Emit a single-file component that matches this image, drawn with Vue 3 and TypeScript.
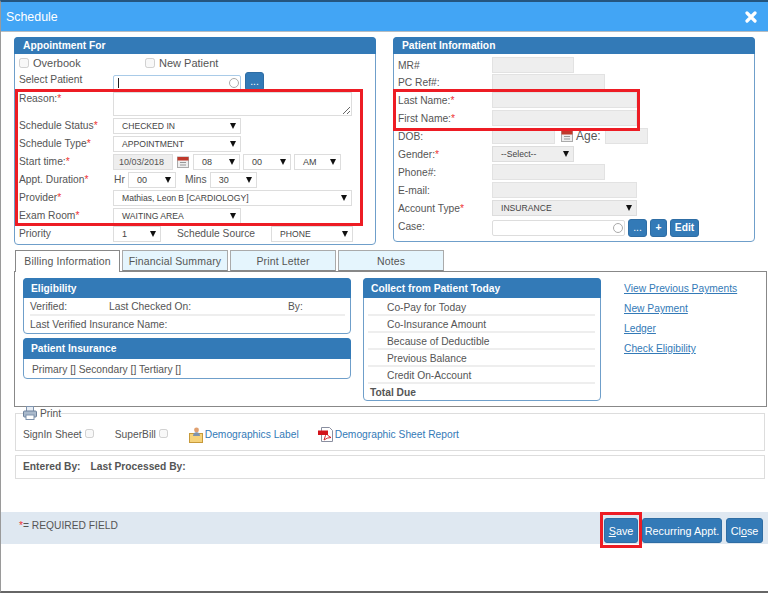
<template>
  <div class="modal">
    <div class="title-bar">
      <span class="title">Schedule</span>
      <svg class="close-x" width="12" height="12" viewBox="0 0 12 12"><path d="M2 2 L10 10 M10 2 L2 10" stroke="#fff" stroke-width="3.2" stroke-linecap="round" /></svg>
    </div>

    <div class="top-panels">
      <section class="panel appt">
        <h3 class="panel-head">Appointment For</h3>
        <div class="panel-body">
          <div class="check-row">
            <label class="check first"><input type="checkbox" disabled />Overbook</label>
            <label class="check"><input type="checkbox" disabled />New Patient</label>
          </div>
          <div class="row patient-row">
            <span class="lbl">Select Patient</span>
            <div class="lookup focus w128"><i class="caret"></i><b class="ring"></b></div>
            <button class="btn dots">...</button>
          </div>
          <div class="row reason-row">
            <span class="lbl">Reason:<em>*</em></span>
            <textarea class="reason"></textarea>
          </div>
          <div class="row">
            <span class="lbl">Schedule Status<em>*</em></span>
            <div class="sel w128"><span>CHECKED IN</span></div>
          </div>
          <div class="row">
            <span class="lbl">Schedule Type<em>*</em></span>
            <div class="sel w128"><span>APPOINTMENT</span></div>
          </div>
          <div class="row">
            <span class="lbl">Start time:<em>*</em></span>
            <div class="date">10/03/2018</div>
            <svg class="cal" width="12" height="12" viewBox="0 0 12 12"><rect x="0.5" y="1" width="11" height="10.5" fill="#eee" stroke="#aaa" /><rect x="0.5" y="1" width="11" height="3.5" fill="#c0392b" /><path d="M3 6.5h6M3 9h6" stroke="#999" /></svg>
            <div class="sel time w47"><span>08</span></div>
            <div class="sel time w48"><span>00</span></div>
            <div class="sel time w47"><span>AM</span></div>
          </div>
          <div class="row">
            <span class="lbl">Appt. Duration<em>*</em></span>
            <span class="inline-lbl hr">Hr</span>
            <div class="sel time w48"><span>00</span></div>
            <span class="inline-lbl mins">Mins</span>
            <div class="sel time w47"><span>30</span></div>
          </div>
          <div class="row">
            <span class="lbl">Provider<em>*</em></span>
            <div class="sel w239"><span>Mathias, Leon B [CARDIOLOGY]</span></div>
          </div>
          <div class="row">
            <span class="lbl">Exam Room<em>*</em></span>
            <div class="sel w128"><span>WAITING AREA</span></div>
          </div>
          <div class="row">
            <span class="lbl">Priority</span>
            <div class="sel time w48"><span>1</span></div>
            <span class="inline-lbl source">Schedule Source</span>
            <div class="sel w82"><span>PHONE</span></div>
          </div>
        </div>
        <div class="mark mark-appt"></div>
      </section>

      <section class="panel info">
        <h3 class="panel-head">Patient Information</h3>
        <div class="panel-body">
          <div class="row mr-row"><span class="lbl">MR#</span><div class="ro w82"></div></div>
          <div class="row"><span class="lbl">PC Ref#:</span><div class="ro w113"></div></div>
          <div class="row"><span class="lbl">Last Name:<em>*</em></span><div class="ro w145"></div></div>
          <div class="row"><span class="lbl">First Name:<em>*</em></span><div class="ro w145"></div></div>
          <div class="row">
            <span class="lbl">DOB:</span>
            <div class="ro w63"></div>
            <svg class="cal dob" width="12" height="12" viewBox="0 0 12 12"><rect x="0.5" y="1" width="11" height="10.5" fill="#eee" stroke="#aaa" /><rect x="0.5" y="1" width="11" height="3.5" fill="#c0392b" /><path d="M3 6.5h6M3 9h6" stroke="#999" /></svg>
            <span class="age">Age:</span>
            <div class="ro w43"></div>
          </div>
          <div class="row"><span class="lbl">Gender:<em>*</em></span><div class="sel ro-sel w82"><span>--Select--</span></div></div>
          <div class="row"><span class="lbl">Phone#:</span><div class="ro w113"></div></div>
          <div class="row"><span class="lbl">E-mail:</span><div class="ro w145"></div></div>
          <div class="row"><span class="lbl">Account Type<em>*</em></span><div class="sel ro-sel w145"><span>INSURANCE</span></div></div>
          <div class="row case-row">
            <span class="lbl">Case:</span>
            <div class="lookup w133"><b class="ring"></b></div>
            <button class="btn dots">...</button>
            <button class="btn plus">+</button>
            <button class="btn edit">Edit</button>
          </div>
        </div>
        <div class="mark mark-info"></div>
      </section>
    </div>

    <div class="tabs">
      <div v-for="(tab, i) in tabs" :key="tab" class="tab" :class="{ active: i === 0 }">{{ tab }}</div>
    </div>
    <div class="tab-body">
      <div class="billing-left">
        <section class="panel sub">
          <h4 class="sub-head">Eligibility</h4>
          <div class="sub-line elig">
            <span class="v">Verified:</span><span class="c">Last Checked On:</span><span>By:</span>
          </div>
          <div class="sub-line plain">Last Verified Insurance Name:</div>
        </section>
        <section class="panel sub ins">
          <h4 class="sub-head tall">Patient Insurance</h4>
          <div class="sub-line plain prim">Primary [] Secondary [] Tertiary []</div>
        </section>
      </div>
      <section class="panel sub collect">
        <h4 class="sub-head">Collect from Patient Today</h4>
        <div v-for="item in dues" :key="item" class="due">{{ item }}</div>
        <div class="due total">Total Due</div>
      </section>
      <div class="links">
        <a v-for="link in links" :key="link" href="#">{{ link }}</a>
      </div>
    </div>

    <fieldset class="print-box">
      <legend>
        <svg width="14" height="14" viewBox="0 0 14 14"><rect x="3.5" y="0.5" width="7" height="5" fill="#e8eef5" stroke="#7f93ad" /><rect x="0.5" y="5" width="13" height="6" rx="1" fill="#a9b9cc" stroke="#6d819c" /><rect x="3" y="9" width="8" height="4.5" fill="#fff" stroke="#7f93ad" /></svg>
        Print
      </legend>
      <span class="opt">SignIn Sheet</span><input class="opt-check" type="checkbox" disabled />
      <span class="opt super">SuperBill</span><input class="opt-check" type="checkbox" disabled />
      <svg class="doc-ico label-ico" width="14" height="16" viewBox="0 0 14 16"><rect x="0.5" y="6.5" width="13" height="9" fill="#f5d27a" stroke="#c79a3a" /><circle cx="7.5" cy="3" r="2.4" fill="#e0a070" /><path d="M4 9 Q4 5.2 7.5 5.2 Q11 5.2 11 9Z" fill="#7f93ad" /></svg>
      <a class="rep" href="#">Demographics Label</a>
      <svg class="doc-ico pdf-ico" width="15" height="15" viewBox="0 0 15 15"><path d="M3.5 0.5h8l3 3v11h-11z" fill="#fff" stroke="#8a8fa0" /><rect x="0" y="3.5" width="10" height="4.5" fill="#d3121a" /><path d="M6 13 Q8 8 8 5 Q10 10 13 10.5 Q9 10.5 6 13Z" fill="none" stroke="#d3121a" stroke-width="0.9" /></svg>
      <a class="rep" href="#">Demographic Sheet Report</a>
    </fieldset>

    <div class="entered">
      <strong>Entered By:</strong><strong>Last Processed By:</strong>
    </div>

    <footer class="foot">
      <span class="req"><em>*</em>= REQUIRED FIELD</span>
      <div class="foot-btns">
        <button class="btn big save"><u>S</u>ave<i class="mark mark-save"></i></button>
        <button class="btn big recur">Recurring Appt.</button>
        <button class="btn big close">Cl<u>o</u>se</button>
      </div>
    </footer>
  </div>
</template>

<script setup lang="ts">
const tabs: string[] = ['Billing Information', 'Financial Summary', 'Print Letter', 'Notes']
const dues: string[] = ['Co-Pay for Today', 'Co-Insurance Amount', 'Because of Deductible', 'Previous Balance', 'Credit On-Account']
const links: string[] = ['View Previous Payments', 'New Payment', 'Ledger', 'Check Eligibility']
</script>

<style>
html,
body {
  margin: 0;
  background: #fff;
}
</style>

<style scoped>
* {
  box-sizing: border-box;
}

.modal {
  position: relative;
  width: 768px;
  height: 593px;
  overflow: hidden;
  background: #fff;
  border-top: 2px solid #24557f;
  border-left: 1px solid #9a9a9a;
  border-bottom: 2px solid #666;
  font-family: 'Liberation Sans', Arial, sans-serif;
  font-size: 10.25px;
  color: #555;
}

.title-bar {
  display: flex;
  align-items: center;
  justify-content: space-between;
  height: 30px;
  padding: 1px 11px 0 5px;
  background: #42a5f5;
  border-bottom: 1px solid #b5bcc2;
}

.title {
  font-size: 12.4px;
  color: #fff;
}

.top-panels {
  display: flex;
  align-items: flex-start;
  gap: 17px;
  padding: 5px 0 0 13px;
}

.panel {
  position: relative;
  border: 1px solid #6f9fca;
  border-radius: 4px;
  background: #fff;
}

.appt,
.info {
  width: 362px;
}

.appt {
  height: 208px;
}

.info {
  height: 205px;
}

.panel-head {
  margin: -1px -1px 0;
  height: 17px;
  padding: 0 9px;
  background: #337ab7;
  border-radius: 4px 4px 0 0;
  color: #fff;
  font-size: 10.25px;
  font-weight: bold;
  line-height: 17px;
}

.panel-body {
  display: flex;
  flex-direction: column;
  gap: 2px;
  padding: 1px 0 0 4px;
}

.row {
  display: flex;
  align-items: center;
  height: 16px;
}

.lbl {
  flex: none;
  width: 94px;
  white-space: nowrap;
}

.appt .lbl {
  margin-top: -2px;
}

em {
  color: #e33;
  font-style: normal;
}

.check-row {
  display: flex;
  height: 15px;
  align-items: center;
  font-size: 11px;
}

.check {
  display: flex;
  align-items: center;
  gap: 4px;
}

.check.first {
  width: 126px;
}

.check input,
.opt-check {
  width: 10px;
  height: 10px;
  margin: 0;
}

.patient-row {
  height: 19px;
  margin-bottom: -1px;
}

.appt .patient-row .lbl {
  margin-top: -5px;
}

.patient-row .lookup {
  margin-top: 3px;
}

.patient-row .btn {
  height: 19px;
  margin-left: 4px;
}

.lookup {
  position: relative;
  height: 16px;
  background: #fff;
  border: 1px solid #ddd;
  border-radius: 2px;
}

.lookup.focus {
  border-color: #a9cbe8;
}

.caret {
  position: absolute;
  left: 4px;
  top: 2px;
  width: 1px;
  height: 10px;
  background: #222;
}

.ring {
  position: absolute;
  right: 1px;
  top: 2px;
  width: 10px;
  height: 10px;
  border: 1px solid #aaa;
  border-radius: 50%;
}

.reason-row {
  height: 24px;
  align-items: flex-start;
}

.appt .reason-row .lbl {
  margin-top: 1px;
}

.reason {
  display: block;
  width: 239px;
  height: 24px;
  margin: 0;
  border: 1px solid #ddd;
  padding: 0;
}

.sel {
  position: relative;
  flex: none;
  height: 16px;
  padding-left: 8px;
  border: 1px solid #ddd;
  background: #fff;
  color: #444;
  font-size: 8.6px;
  line-height: 14px;
  white-space: nowrap;
}

.sel::after {
  content: '';
  position: absolute;
  right: 4px;
  top: 4px;
  border-left: 3px solid transparent;
  border-right: 3px solid transparent;
  border-top: 6px solid #111;
}

.time {
  font-size: 9px;
}

.w47 {
  width: 47px;
}

.w48 {
  width: 48px;
}

.w63 {
  width: 63px;
}

.w43 {
  width: 43px;
}

.w82 {
  width: 82px;
}

.w113 {
  width: 113px;
}

.w128 {
  width: 128px;
}

.w133 {
  width: 133px;
}

.w145 {
  width: 145px;
}

.w239 {
  width: 239px;
}

.date {
  flex: none;
  width: 60px;
  height: 16px;
  padding-left: 5px;
  background: #eee;
  border: 1px solid #ddd;
  font-size: 9px;
  line-height: 14px;
}

.cal {
  flex: none;
  margin: 0 4px;
}

.date ~ .time + .time,
.date ~ .time + .time + .time {
  margin-left: 3px;
}

.inline-lbl {
  flex: none;
  margin-top: -2px;
  white-space: nowrap;
}

.hr {
  width: 14px;
  margin-left: 1px;
}

.mins {
  margin-left: 9px;
  margin-right: 3px;
}

.source {
  margin-left: 16px;
  margin-right: 16px;
}

.mark {
  position: absolute;
  border: 3px solid #ed1c24;
  pointer-events: none;
}

.mark-appt {
  left: 0;
  top: 51px;
  width: 348px;
  height: 137px;
}

.mark-info {
  left: -1px;
  top: 51px;
  width: 247px;
  height: 42px;
}

.ro {
  flex: none;
  height: 16px;
  background: #eee;
  border: 1px solid #e2e2e2;
}

.ro-sel {
  background: #eee;
}

.info .panel-body {
  padding-top: 3px;
}

.mr-row {
  margin-bottom: -1px;
}

.cal.dob {
  margin: 0 3px 0 6px;
}

.age {
  width: 29px;
  font-size: 12px;
}

.case-row {
  height: 18px;
  margin-top: 1px;
}

.case-row .lbl {
  margin-top: -3px;
}

.case-row .btn {
  margin-left: 3px;
}

.btn {
  flex: none;
  height: 18px;
  padding: 0;
  border: 1px solid #2e6da4;
  border-radius: 3px;
  background: #337ab7;
  color: #fff;
  font-family: inherit;
  font-size: 10.25px;
  font-weight: bold;
  line-height: 14px;
}

.dots {
  width: 19px;
  font-weight: normal;
}

.plus {
  width: 17px;
}

.edit {
  width: 29px;
}

.tabs {
  display: flex;
  gap: 2px;
  height: 22px;
  margin: 5px 0 0 14px;
  position: relative;
  z-index: 1;
}

.tab {
  width: 106px;
  height: 21px;
  border: 1px solid #aaa;
  border-bottom: 1px solid #888;
  background: #e5f5fd;
  text-align: center;
  line-height: 20px;
  font-size: 10.5px;
  letter-spacing: 0.15px;
}

.tab.active {
  width: 105px;
  height: 22px;
  border-color: #888;
  border-bottom: 0;
  background: #fff;
}

.tab-body {
  display: flex;
  align-items: flex-start;
  height: 136px;
  margin: -1px 1px 0 13px;
  padding: 6px 0 0 8px;
  border: 1px solid #888;
}

.billing-left {
  width: 328px;
}

.sub {
  border-color: #6f9fca;
  border-radius: 4px;
}

.sub-head {
  margin: -1px -1px 0;
  height: 20px;
  padding: 0 8px;
  background: #337ab7;
  border-radius: 4px 4px 0 0;
  color: #fff;
  font-size: 10.25px;
  font-weight: bold;
  line-height: 21px;
}

.sub-head.tall {
  height: 21px;
  line-height: 21px;
}

.sub-line {
  height: 17px;
  line-height: 17px;
  margin: 0 5px 0 6px;
}

.elig {
  display: flex;
  height: 18px;
  line-height: 18px;
  border-bottom: 2px solid #eee;
}

.elig .v {
  width: 79px;
}

.elig .c {
  width: 179px;
}

.ins {
  margin-top: 4px;
}

.prim {
  margin-left: 8px;
  height: 19px;
  line-height: 21px;
}

.collect {
  width: 238px;
  height: 123px;
  margin-left: 12px;
}

.due {
  height: 17px;
  margin: 0 5px 0 4px;
  padding-left: 19px;
  border-bottom: 2px solid #eee;
  line-height: 17px;
}

.due:first-of-type {
  height: 18px;
  padding-top: 1px;
}

.due.total {
  padding-left: 2px;
  border-bottom: 0;
  font-weight: bold;
}

.links {
  display: flex;
  flex-direction: column;
  gap: 6px;
  margin: 4px 0 0 23px;
}

.links a {
  height: 14px;
  color: #337ab7;
  line-height: 14px;
}

.print-box {
  display: flex;
  align-items: center;
  width: 750px;
  height: 45px;
  margin: -1px 0 0 14px;
  padding: 0 0 1px 7px;
  border: 1px solid #ddd;
}

.print-box legend {
  display: flex;
  align-items: center;
  gap: 3px;
  padding: 0;
  height: 14px;
}

.opt-check {
  width: 9px;
  height: 9px;
  margin: -3px 0 0 3px;
}

.super {
  margin-left: 21px;
}

.doc-ico {
  margin-left: 21px;
  margin-right: 2px;
}

.pdf-ico {
  margin-left: 19px;
  margin-right: 2px;
}

.rep {
  color: #337ab7;
  text-decoration: none;
}

.entered {
  display: flex;
  align-items: center;
  gap: 10px;
  width: 750px;
  height: 24px;
  margin: 4px 0 0 14px;
  padding: 0 0 2px 7px;
  border: 1px solid #ddd;
}

.foot {
  position: absolute;
  left: -1px;
  right: 0;
  top: 510px;
  display: flex;
  align-items: center;
  justify-content: space-between;
  height: 32px;
  padding: 0 5px 0 19px;
  background: #dfe8f1;
}

.req {
  margin-top: -6px;
}

.foot-btns {
  display: flex;
  gap: 4px;
  margin-top: 5px;
}

.btn.big {
  position: relative;
  height: 25px;
  padding: 0;
  font-size: 10.8px;
  font-weight: normal;
}

.save {
  width: 34px;
}

.recur {
  width: 80px;
}

.close {
  width: 37px;
}

.mark-save {
  left: -5px;
  top: -7px;
  width: 42px;
  height: 36px;
}
</style>
